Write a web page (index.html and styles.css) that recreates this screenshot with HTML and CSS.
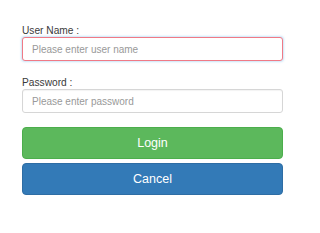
FILE: index.html
```html
<!DOCTYPE html>
<html lang="en">
<head>
    <meta charset="UTF-8">
    <meta name="viewport" content="width=device-width, initial-scale=1.0">
    <title>Login</title>
    <link rel="stylesheet" href="styles.css">
</head>
<body>

<form class="login-form" onsubmit="return false">
    <div class="form-group">
        <label for="userName">User Name :</label>
        <input type="text" id="userName" class="form-control has-error" placeholder="Please enter user name">
    </div>

    <div class="form-group">
        <label for="password">Password :</label>
        <input type="password" id="password" class="form-control" placeholder="Please enter password">
    </div>

    <div class="actions">
        <button type="submit" class="btn btn-success">Login</button>
        <button type="button" class="btn btn-primary">Cancel</button>
    </div>
</form>

</body>
</html>
```

FILE: styles.css
```css
body {
    margin: 0;
    font-family: 'Liberation Sans', Arial, sans-serif;
    background: #fff;
    color: #333;
}

.login-form {
    width: 261px;
    padding: 24px 0 0 22px;
}

.form-group {
    display: flex;
    flex-direction: column;
    margin-bottom: 15px;
}

label {
    font-size: 10.2px;
    line-height: 13px;
    color: #3a3a3a;
}

.form-control {
    box-sizing: border-box;
    height: 24px;
    width: 100%;
    margin: 0;
    padding: 0 9px;
    font-family: inherit;
    font-size: 10px;
    color: #555;
    background: #fff;
    border: 1px solid #d6d6d6;
    border-radius: 3px;
    box-shadow: inset 0 1px 1px rgba(0, 0, 0, 0.05);
    outline: none;
}

.form-control::placeholder {
    color: #999;
}

.form-control.has-error {
    border-color: #f07a86;
    box-shadow: 0 0 2px 1px rgba(102, 175, 233, 0.35);
}

.actions {
    display: flex;
    flex-direction: column;
    gap: 4px;
    margin-top: -1px;
}

.btn {
    box-sizing: border-box;
    height: 32px;
    width: 100%;
    padding: 0;
    font-family: inherit;
    font-size: 12.5px;
    color: #fff;
    border: 1px solid transparent;
    border-radius: 4px;
    cursor: pointer;
}

.btn-success {
    background: #5cb85c;
    border-color: #4cae4c;
}

.btn-primary {
    background: #337ab7;
    border-color: #2e6da4;
}
```
